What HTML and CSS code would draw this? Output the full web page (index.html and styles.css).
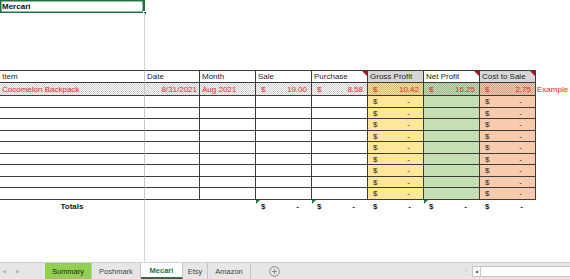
FILE: index.html
```html
<!DOCTYPE html>
<html>
	<head>
		<link rel="stylesheet" href="styles.css">
	</head>
	<body>
		<div class="sheet">
			<div class="row r-title">
				<div class="c a title">Mercari</div>
				<div class="c span"></div>
			</div>
			<div class="row r-space">
				<div class="c a"></div>
				<div class="c span"></div>
			</div>

			<div class="row r-head">
				<div class="c a t">Item</div>
				<div class="c t">Date</div>
				<div class="c t">Month</div>
				<div class="c t">Sale</div>
				<div class="c t note">Purchase</div>
				<div class="c t grey">Gross Profit</div>
				<div class="c t note">Net Profit</div>
				<div class="c t grey note">Cost to Sale</div>
				<div class="c x"></div>
			</div>

			<div class="row r-data red">
				<div class="c a t dots">Cocomelon Backpack</div>
				<div class="c t dots right">8/31/2021</div>
				<div class="c t dots">Aug 2021</div>
				<div class="c t dots acc"><span>$</span><span>19.00</span></div>
				<div class="c t dots acc"><span>$</span><span>8.58</span></div>
				<div class="c t dots gold acc"><span>$</span><span>10.42</span></div>
				<div class="c t dots green acc"><span>$</span><span>16.25</span></div>
				<div class="c t dots peach acc"><span>$</span><span>2.75</span></div>
				<div class="c x">Example</div>
			</div>

			<div class="row r-line">
				<div class="c a t"></div><div class="c t"></div><div class="c t"></div><div class="c t"></div><div class="c t"></div>
				<div class="c t gold acc dash"><span>$</span><span>-</span></div>
				<div class="c t green"></div>
				<div class="c t peach acc dash"><span>$</span><span>-</span></div>
				<div class="c x"></div>
			</div>
			<div class="row r-line">
				<div class="c a t"></div><div class="c t"></div><div class="c t"></div><div class="c t"></div><div class="c t"></div>
				<div class="c t gold acc dash"><span>$</span><span>-</span></div>
				<div class="c t green"></div>
				<div class="c t peach acc dash"><span>$</span><span>-</span></div>
				<div class="c x"></div>
			</div>
			<div class="row r-line">
				<div class="c a t"></div><div class="c t"></div><div class="c t"></div><div class="c t"></div><div class="c t"></div>
				<div class="c t gold acc dash"><span>$</span><span>-</span></div>
				<div class="c t green"></div>
				<div class="c t peach acc dash"><span>$</span><span>-</span></div>
				<div class="c x"></div>
			</div>
			<div class="row r-line">
				<div class="c a t"></div><div class="c t"></div><div class="c t"></div><div class="c t"></div><div class="c t"></div>
				<div class="c t gold acc dash"><span>$</span><span>-</span></div>
				<div class="c t green"></div>
				<div class="c t peach acc dash"><span>$</span><span>-</span></div>
				<div class="c x"></div>
			</div>
			<div class="row r-line">
				<div class="c a t"></div><div class="c t"></div><div class="c t"></div><div class="c t"></div><div class="c t"></div>
				<div class="c t gold acc dash"><span>$</span><span>-</span></div>
				<div class="c t green"></div>
				<div class="c t peach acc dash"><span>$</span><span>-</span></div>
				<div class="c x"></div>
			</div>
			<div class="row r-line">
				<div class="c a t"></div><div class="c t"></div><div class="c t"></div><div class="c t"></div><div class="c t"></div>
				<div class="c t gold acc dash"><span>$</span><span>-</span></div>
				<div class="c t green"></div>
				<div class="c t peach acc dash"><span>$</span><span>-</span></div>
				<div class="c x"></div>
			</div>
			<div class="row r-line">
				<div class="c a t"></div><div class="c t"></div><div class="c t"></div><div class="c t"></div><div class="c t"></div>
				<div class="c t gold acc dash"><span>$</span><span>-</span></div>
				<div class="c t green"></div>
				<div class="c t peach acc dash"><span>$</span><span>-</span></div>
				<div class="c x"></div>
			</div>
			<div class="row r-line">
				<div class="c a t"></div><div class="c t"></div><div class="c t"></div><div class="c t"></div><div class="c t"></div>
				<div class="c t gold acc dash"><span>$</span><span>-</span></div>
				<div class="c t green"></div>
				<div class="c t peach acc dash"><span>$</span><span>-</span></div>
				<div class="c x"></div>
			</div>
			<div class="row r-line">
				<div class="c a t"></div><div class="c t"></div><div class="c t"></div><div class="c t"></div><div class="c t"></div>
				<div class="c t gold acc dash"><span>$</span><span>-</span></div>
				<div class="c t green"></div>
				<div class="c t peach acc dash"><span>$</span><span>-</span></div>
				<div class="c x"></div>
			</div>

			<div class="row r-total">
				<div class="c a total-label">Totals</div>
				<div class="c"></div>
				<div class="c"></div>
				<div class="c acc dash err"><span>$</span><span>-</span></div>
				<div class="c acc dash err"><span>$</span><span>-</span></div>
				<div class="c acc dash"><span>$</span><span>-</span></div>
				<div class="c acc dash err"><span>$</span><span>-</span></div>
				<div class="c acc dash"><span>$</span><span>-</span></div>
				<div class="c x"></div>
			</div>

			<div class="row r-fill">
				<div class="c a"></div>
				<div class="c span"></div>
			</div>
		</div>

		<div class="tabbar">
			<div class="tab-nav"><span>&#9664;</span><span>&#9654;</span></div>
			<div class="tab summary">Summary</div>
			<div class="tab poshmark">Poshmark</div>
			<div class="tab active mecari">Mecari</div>
			<div class="tab etsy">Etsy</div>
			<div class="tab amazon">Amazon</div>
			<div class="add-sheet">
				<svg width="11" height="11" viewBox="0 0 11 11">
					<circle cx="5.5" cy="5.5" r="4.8" fill="none" stroke="#8a8a8a" stroke-width="1"/>
					<path d="M5.5 3v5M3 5.5h5" stroke="#8a8a8a" stroke-width="1"/>
				</svg>
			</div>
			<div class="tab-space"></div>
			<div class="splitter">&#8942;</div>
			<div class="hscroll"><span class="hscroll-arrow">&#9664;</span></div>
		</div>
	</body>
</html>
```

FILE: styles.css
```css
html {
  box-sizing: border-box;
  font-family: 'Liberation Sans', Arial, sans-serif;
}

*, *:before, *:after {
  box-sizing: inherit;
}

body {
  margin: 0;
  padding: 0;
  width: 570px;
  height: 279px;
  overflow: hidden;
  background: #ffffff;
  color: #262626;
  font-size: 8px;
}

.sheet {
  height: 262px;
  display: flex;
  flex-direction: column;
}

.row {
  display: grid;
  grid-template-columns: 145px 55px repeat(6, 56px) 1fr;
}

.c {
  position: relative;
  display: flex;
  align-items: center;
  padding: 0 2px;
  white-space: nowrap;
  overflow: visible;
}

.a {
  border-right: 1px solid #d4d4d4;
}

.span {
  grid-column: 2 / -1;
}

/* title row with the selected cell */
.r-title {
  height: 13px;
}
.title {
  font-weight: bold;
  color: #111;
  box-shadow: inset 0 0 0 1.5px #217346;
  border-right-color: #217346;
}
.title:after {
  content: '';
  position: absolute;
  right: -3px;
  bottom: -2px;
  width: 4px;
  height: 4px;
  background: #217346;
  border: 1px solid #ffffff;
}

.r-space {
  height: 57px;
}

/* table */
.t {
  border-right: 1px solid #3c3c3c;
  border-bottom: 1px solid #3c3c3c;
}
.a.t {
  border-right-color: #c8c8c8;
}

.r-head {
  height: 13px;
}
.r-head .t {
  border-top: 1px solid #3c3c3c;
}

.r-data {
  height: 13px;
}
.r-line {
  height: 12px;
}
.r-line:nth-child(even) {
  height: 11px;
}

.r-total {
  height: 12px;
  font-weight: bold;
  color: #1a1a1a;
}
.total-label {
  justify-content: center;
}

.r-fill {
  flex: 1;
}

.grey {
  background: #d6d6d6;
}
.gold {
  background-color: #ffe699;
}
.green {
  background-color: #c6e0b4;
}
.peach {
  background-color: #f8cbad;
}

.dots {
  background-image: repeating-conic-gradient(rgba(0,0,0,.2) 0 25%, transparent 0 50%);
  background-size: 2px 2px;
}

.red {
  color: #e8262b;
}

.right {
  justify-content: flex-end;
}

.acc {
  justify-content: space-between;
  padding: 0 4px 0 5px;
}
.acc.dash {
  padding-right: 13px;
}

.x {
  padding-left: 1px;
}

/* comment marker */
.note:after {
  content: '';
  position: absolute;
  top: 0;
  right: 0;
  border-top: 5px solid #d0021b;
  border-left: 5px solid transparent;
}

/* formula warning marker */
.err:before {
  content: '';
  position: absolute;
  top: 0;
  left: 0;
  border-top: 4px solid #1e7b45;
  border-right: 4px solid transparent;
}

/* sheet tabs */
.tabbar {
  height: 17px;
  background: #e6e6e6;
  border-top: 1px solid #cfcfcf;
  display: flex;
  align-items: stretch;
  font-size: 7.5px;
  color: #444;
}

.tab-nav {
  width: 45px;
  display: flex;
  align-items: center;
  gap: 10px;
  padding-left: 2px;
  font-size: 5px;
  color: #b5b5b5;
}

.tab {
  display: flex;
  align-items: center;
  justify-content: center;
  border-right: 1px solid #c4c4c4;
}

.summary {
  width: 47px;
  background: #92d050;
  color: #1f1f1f;
}
.poshmark {
  width: 49px;
}
.mecari {
  width: 42px;
}
.etsy {
  width: 25px;
}
.amazon {
  width: 43px;
}

.active {
  background: #ffffff;
  color: #217346;
  font-weight: bold;
  border-bottom: 2px solid #217346;
}

.add-sheet {
  display: flex;
  align-items: center;
  padding-left: 18px;
}

.tab-space {
  flex: 1;
}

.splitter {
  display: flex;
  align-items: center;
  width: 10px;
  color: #b5b5b5;
  font-size: 8px;
}

.hscroll {
  width: 98px;
  margin: 3px 0 2px;
  background: #ffffff;
  border: 1px solid #c6c6c6;
  border-right: none;
  display: flex;
  align-items: center;
}
.hscroll-arrow {
  width: 8px;
  height: 100%;
  display: flex;
  align-items: center;
  justify-content: center;
  border-right: 1px solid #c6c6c6;
  font-size: 4px;
  color: #555;
}
```
